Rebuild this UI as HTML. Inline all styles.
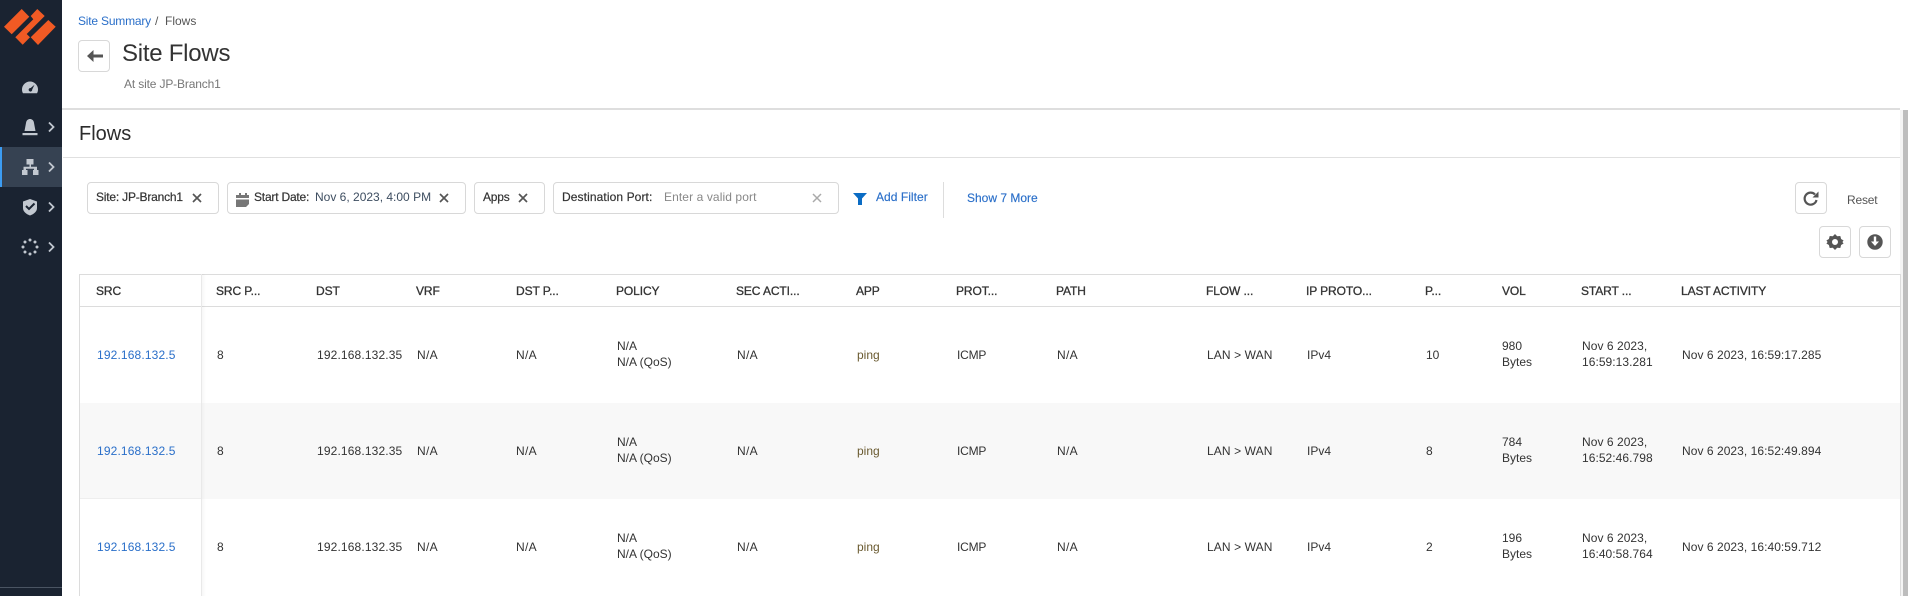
<!DOCTYPE html>
<html><head><meta charset="utf-8">
<style>
html,body{margin:0;padding:0;width:1908px;height:596px;overflow:hidden;background:#fff}
body{position:relative;font-family:"Liberation Sans",sans-serif;font-size:12px;color:#333}
.a{position:absolute}
.t{position:absolute;white-space:nowrap;line-height:15px}
.t.two{line-height:16px;margin-top:-1px}
.box{position:absolute;box-sizing:border-box;border:1px solid #d8d8d8;border-radius:4px;background:#fff}
.h{position:absolute;white-space:nowrap;top:284px;line-height:15px;font-size:12px;color:#333;-webkit-text-stroke:.3px #333;letter-spacing:-.1px}
.l{color:#2a6fc9}
.n{letter-spacing:.14px}
.na{letter-spacing:.3px}
.d{letter-spacing:.05px}
.p{color:#6a5a30}
svg{position:absolute;overflow:visible}
</style></head><body>
<!-- sidebar -->
<div class="a" style="left:0;top:0;width:62px;height:596px;background:#1a2331"></div>
<div class="a" style="left:0;top:147px;width:62px;height:40px;background:#364252"></div>
<div class="a" style="left:0;top:147px;width:2px;height:40px;background:#3c9cf2"></div>
<div class="a" style="left:0;top:587px;width:62px;height:1px;background:#4a5462"></div>
<svg style="left:0;top:0" width="62" height="50" viewBox="0 0 62 50">
<path fill="#f15a24" d="M4 26.700 21.700 9 29.300 16.700 11.700 34.300Z"/>
<path fill="#f15a24" d="M15.300 37.300 33.300 19.300 30.700 16 37.300 9 44.700 16 26.700 34 30 37.300 22.700 44.700Z"/>
<path fill="#f15a24" d="M30.700 37.300 48.300 20 55.700 26.700 38 45Z"/>
</svg>
<svg style="left:0;top:70px" width="62" height="200" viewBox="0 70 62 200" fill="#c2c8d0">
<path fill-rule="evenodd" d="M30 81.500a8 8 0 0 1 8 8c0 1.500-.4 2.800-1 3.800H23c-.6-1-1-2.300-1-3.800a8 8 0 0 1 8-8Zm4.500 3.200-3.800 3.300a1.800 1.800 0 1 0 1.500 1.500Z"/>
<path d="M24.500 131l1.700-9c.4-1.700 2-3 3.800-3s3.400 1.300 3.800 3l1.700 9Z"/><rect x="22.500" y="133" width="15" height="2.200"/>
<path d="M26.500 159h7v5.500h-2.500v2.200h6v3.300h1.500v5h-5.500v-5H34v-1.300h-8V170h1.500v5H22v-5h1.500v-3.300h6v-2.200h-3Z"/>
<path d="M30 199l7 2.500v6.500c0 3.500-3 6-7 7.500-4-1.500-7-4-7-7.500v-6.500Z"/>
<path fill="none" stroke="#1a2331" stroke-width="2" d="M26 206l3 3 5.500-5.500"/>
<g><circle cx="30" cy="240" r="1.500"/><circle cx="35" cy="242" r="1.500"/><circle cx="37" cy="247" r="1.500"/><circle cx="35" cy="252" r="1.500"/><circle cx="30" cy="254" r="1.500"/><circle cx="25" cy="252" r="1.500"/><circle cx="23" cy="247" r="1.500"/><circle cx="25" cy="242" r="1.500"/></g>
<g fill="none" stroke="#c2c8d0" stroke-width="1.800"><path d="M49 122.500l4.500 4.500-4.500 4.500"/><path d="M49 162.500l4.500 4.500-4.500 4.500"/><path d="M49 202.500l4.500 4.500-4.500 4.500"/><path d="M49 242.500l4.500 4.500-4.500 4.500"/></g>
</svg>
<!-- header -->
<div class="t l" style="left:78px;top:14px;letter-spacing:-.2px">Site Summary</div>
<div class="t" style="left:155px;top:14px;color:#555">/</div>
<div class="t" style="left:165px;top:14px;color:#555">Flows</div>
<div class="box" style="left:78px;top:40px;width:32px;height:32px"></div>
<svg style="left:78px;top:40px" width="32" height="32" viewBox="0 0 32 32"><path fill="#555" d="M9 16l6.500-6v4.500H25v3h-9.500V22Z"/></svg>
<div class="t" style="left:122px;top:39px;font-size:24px;line-height:30px;color:#333;letter-spacing:-.25px">Site Flows</div>
<div class="t" style="left:124px;top:77px;color:#777;font-size:12px;letter-spacing:-.15px">At site JP-Branch1</div>
<div class="a" style="left:62px;top:108px;width:1838px;height:2px;background:#dedede"></div>
<div class="t" style="left:79px;top:121px;font-size:20px;line-height:26px;color:#2c2c2c">Flows</div>
<div class="a" style="left:63px;top:157px;width:1837px;height:1px;background:#e0e0e0"></div>
<!-- chips -->
<div class="box" style="left:87px;top:182px;width:132px;height:32px"></div>
<div class="t" style="left:96px;top:190px;letter-spacing:-.2px;-webkit-text-stroke:.2px #333">Site: JP-Branch1</div>
<svg style="left:192px;top:193px" width="10" height="10" fill="none" stroke="#555" stroke-width="1.700"><path d="M1 1l8 8M9 1l-8 8"/></svg>
<div class="box" style="left:227px;top:182px;width:239px;height:32px"></div>
<svg style="left:236px;top:193px" width="14" height="15" viewBox="0 0 14 15" fill="#777"><rect x="3" y="0" width="2" height="2"/><rect x="9" y="0" width="2" height="2"/><rect x="0" y="2" width="13" height="3"/><path d="M0 6.500h13V11l-3 3H0ZM7 9h4v1H7Z"/></svg>
<div class="t" style="left:254px;top:190px;letter-spacing:-.2px;-webkit-text-stroke:.2px #333">Start Date:</div>
<div class="t" style="left:315px;top:190px;color:#3d4d60;letter-spacing:0">Nov 6, 2023, 4:00 PM</div>
<svg style="left:439px;top:193px" width="10" height="10" fill="none" stroke="#555" stroke-width="1.700"><path d="M1 1l8 8M9 1l-8 8"/></svg>
<div class="box" style="left:474px;top:182px;width:71px;height:32px"></div>
<div class="t" style="left:483px;top:190px;letter-spacing:-.2px;-webkit-text-stroke:.2px #333">Apps</div>
<svg style="left:518px;top:193px" width="10" height="10" fill="none" stroke="#555" stroke-width="1.700"><path d="M1 1l8 8M9 1l-8 8"/></svg>
<div class="box" style="left:553px;top:182px;width:286px;height:32px"></div>
<div class="t" style="left:562px;top:190px;letter-spacing:.1px;-webkit-text-stroke:.2px #333">Destination Port:</div>
<div class="t" style="left:664px;top:190px;color:#888;letter-spacing:.1px">Enter a valid port</div>
<svg style="left:812px;top:193px" width="10" height="10" fill="none" stroke="#aaa" stroke-width="1.500"><path d="M1 1l8 8M9 1l-8 8"/></svg>
<svg style="left:853px;top:193px" width="14" height="12" viewBox="0 0 14 12"><path fill="#0b6cc4" d="M0 0h14L9 5.500V12H5V5.500Z"/></svg>
<div class="t l" style="left:876px;top:190px;letter-spacing:.04px;-webkit-text-stroke:.15px #2a6fc9">Add Filter</div>
<div class="a" style="left:943px;top:182px;width:1px;height:36px;background:#ddd"></div>
<div class="t l" style="left:967px;top:191px;letter-spacing:0;-webkit-text-stroke:.15px #2a6fc9">Show 7 More</div>
<!-- tools -->
<div class="box" style="left:1795px;top:182px;width:32px;height:32px"></div>
<svg style="left:1795px;top:182px" width="32" height="32" viewBox="0 0 32 32" fill="none" stroke="#555" stroke-width="2.200"><path d="M20 12.500A6 6 0 1 0 21.500 18"/><path fill="#555" stroke="none" d="M23.500 9.500v6h-6Z"/></svg>
<div class="t" style="left:1847px;top:193px;color:#555;font-size:12px;letter-spacing:-.2px">Reset</div>
<div class="box" style="left:1819px;top:226px;width:32px;height:32px"></div>
<svg style="left:1819px;top:226px" width="32" height="32" viewBox="0 0 32 32"><path fill="#555" fill-rule="evenodd" d="M16 8.500l2.200 2.300 3.100-.3.800 3 2.500 1.500-1.200 1.500 1.200 1.500-2.500 1.500-.8 3-3.100-.3-2.200 2.300-2.200-2.300-3.100.3-.8-3-2.500-1.500 1.200-1.500-1.200-1.500 2.500-1.500.8-3 3.100.3ZM16 13.500a3 3 0 1 0 0 6 3 3 0 0 0 0-6Z" transform="translate(0 -.5)"/></svg>
<div class="box" style="left:1859px;top:226px;width:32px;height:32px"></div>
<svg style="left:1859px;top:226px" width="32" height="32" viewBox="0 0 32 32"><circle cx="16" cy="16" r="7.700" fill="#555"/><path fill="#fff" d="M14.800 10.500h2.400v5h2.800L16 20l-4-4.500h2.800Z"/></svg>
<!-- scrollbar -->
<div class="a" style="left:1900px;top:110px;width:8px;height:486px;background:#f4f4f4"></div>
<div class="a" style="left:1903px;top:110px;width:5px;height:486px;background:#bdbdbd"></div>
<!-- table -->
<div class="a" style="left:79px;top:274px;width:1822px;height:1px;background:#dcdcdc"></div>
<div class="a" style="left:79px;top:306px;width:1822px;height:1px;background:#dcdcdc"></div>
<div class="a" style="left:79px;top:274px;width:1px;height:322px;background:#dcdcdc"></div>
<div class="a" style="left:1900px;top:274px;width:1px;height:322px;background:#dcdcdc"></div>
<div class="a" style="left:80px;top:403px;width:1820px;height:96px;background:#f8f8f8"></div>
<div class="a" style="left:201px;top:274px;width:1px;height:322px;background:#e9e9e9"></div>
<div class="a" style="left:202px;top:274px;width:4px;height:322px;background:linear-gradient(90deg,rgba(0,0,0,.03),rgba(0,0,0,0))"></div>
<div class="a" style="left:80px;top:498px;width:121px;height:1px;background:#eee"></div>
<div class="h" style="left:96px">SRC</div>
<div class="h" style="left:216px">SRC P...</div>
<div class="h" style="left:316px">DST</div>
<div class="h" style="left:416px">VRF</div>
<div class="h" style="left:516px">DST P...</div>
<div class="h" style="left:616px">POLICY</div>
<div class="h" style="left:736px">SEC ACTI...</div>
<div class="h" style="left:856px">APP</div>
<div class="h" style="left:956px">PROT...</div>
<div class="h" style="left:1056px">PATH</div>
<div class="h" style="left:1206px">FLOW ...</div>
<div class="h" style="left:1306px">IP PROTO...</div>
<div class="h" style="left:1425px">P...</div>
<div class="h" style="left:1502px">VOL</div>
<div class="h" style="left:1581px">START ...</div>
<div class="h" style="left:1681px">LAST ACTIVITY</div>
<!-- row 1 -->
<div class="t l n" style="left:97px;top:348px">192.168.132.5</div>
<div class="t" style="left:217px;top:348px">8</div>
<div class="t n" style="left:317px;top:348px">192.168.132.35</div>
<div class="t na" style="left:417px;top:348px">N/A</div>
<div class="t na" style="left:516px;top:348px">N/A</div>
<div class="t two" style="left:617px;top:339px">N/A<br>N/A (QoS)</div>
<div class="t na" style="left:737px;top:348px">N/A</div>
<div class="t p" style="left:857px;top:348px">ping</div>
<div class="t" style="left:957px;top:348px;letter-spacing:-.2px">ICMP</div>
<div class="t na" style="left:1057px;top:348px">N/A</div>
<div class="t" style="left:1207px;top:348px;letter-spacing:.1px">LAN &gt; WAN</div>
<div class="t" style="left:1307px;top:348px">IPv4</div>
<div class="t" style="left:1426px;top:348px">10</div>
<div class="t two" style="left:1502px;top:339px">980<br>Bytes</div>
<div class="t two d" style="left:1582px;top:339px">Nov 6 2023,<br>16:59:13.281</div>
<div class="t d" style="left:1682px;top:348px">Nov 6 2023, 16:59:17.285</div>
<!-- row 2 -->
<div class="t l n" style="left:97px;top:444px">192.168.132.5</div>
<div class="t" style="left:217px;top:444px">8</div>
<div class="t n" style="left:317px;top:444px">192.168.132.35</div>
<div class="t na" style="left:417px;top:444px">N/A</div>
<div class="t na" style="left:516px;top:444px">N/A</div>
<div class="t two" style="left:617px;top:435px">N/A<br>N/A (QoS)</div>
<div class="t na" style="left:737px;top:444px">N/A</div>
<div class="t p" style="left:857px;top:444px">ping</div>
<div class="t" style="left:957px;top:444px;letter-spacing:-.2px">ICMP</div>
<div class="t na" style="left:1057px;top:444px">N/A</div>
<div class="t" style="left:1207px;top:444px;letter-spacing:.1px">LAN &gt; WAN</div>
<div class="t" style="left:1307px;top:444px">IPv4</div>
<div class="t" style="left:1426px;top:444px">8</div>
<div class="t two" style="left:1502px;top:435px">784<br>Bytes</div>
<div class="t two d" style="left:1582px;top:435px">Nov 6 2023,<br>16:52:46.798</div>
<div class="t d" style="left:1682px;top:444px">Nov 6 2023, 16:52:49.894</div>
<!-- row 3 -->
<div class="t l n" style="left:97px;top:540px">192.168.132.5</div>
<div class="t" style="left:217px;top:540px">8</div>
<div class="t n" style="left:317px;top:540px">192.168.132.35</div>
<div class="t na" style="left:417px;top:540px">N/A</div>
<div class="t na" style="left:516px;top:540px">N/A</div>
<div class="t two" style="left:617px;top:531px">N/A<br>N/A (QoS)</div>
<div class="t na" style="left:737px;top:540px">N/A</div>
<div class="t p" style="left:857px;top:540px">ping</div>
<div class="t" style="left:957px;top:540px;letter-spacing:-.2px">ICMP</div>
<div class="t na" style="left:1057px;top:540px">N/A</div>
<div class="t" style="left:1207px;top:540px;letter-spacing:.1px">LAN &gt; WAN</div>
<div class="t" style="left:1307px;top:540px">IPv4</div>
<div class="t" style="left:1426px;top:540px">2</div>
<div class="t two" style="left:1502px;top:531px">196<br>Bytes</div>
<div class="t two d" style="left:1582px;top:531px">Nov 6 2023,<br>16:40:58.764</div>
<div class="t d" style="left:1682px;top:540px">Nov 6 2023, 16:40:59.712</div>
</body></html>
